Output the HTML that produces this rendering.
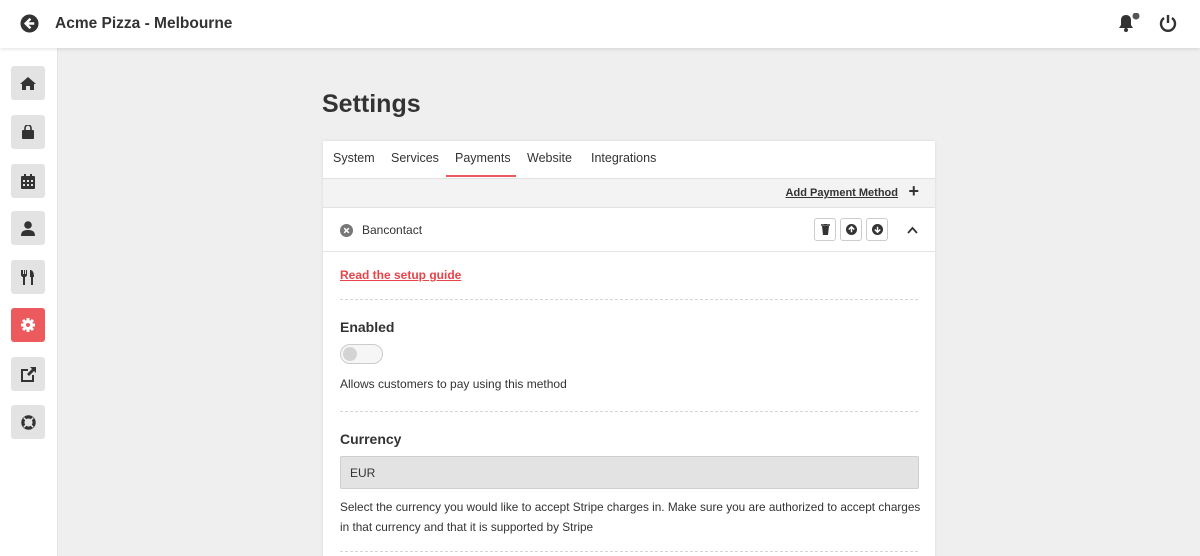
<!DOCTYPE html>
<html><head><style>
*{box-sizing:border-box;margin:0;padding:0}
html,body{width:1200px;height:556px;overflow:hidden}
body{background:#efefef;font-family:"Liberation Sans",sans-serif;color:#333;position:relative}
.hdr{position:absolute;left:0;top:0;width:1200px;height:48px;background:#fff;box-shadow:0 1px 4px rgba(0,0,0,.12);z-index:2}
.side{position:absolute;left:0;top:48px;width:58px;height:520px;background:#fff;border-right:1px solid #e4e4e4}
.sb{position:absolute;left:11px;width:34px;height:34px;background:#e3e3e3;border-radius:3px;display:flex;align-items:center;justify-content:center}
.card{position:absolute;left:323px;top:141px;width:612px;height:420px;background:#fff;box-shadow:0 0 3px rgba(0,0,0,.1)}
.tab{position:absolute;top:10px;font-size:12.5px;color:#333}
.ib{position:absolute;top:10px;width:22px;height:23px;border:1px solid #ccc;border-radius:3px;display:flex;align-items:center;justify-content:center}
.dash{position:absolute;left:17px;width:578px;border-top:1px dashed #d5d5d5}
</style></head><body>
<div class="hdr">
<svg style="position:absolute;left:20px;top:14px" width="19" height="19" viewBox="0 0 20 20"><circle cx="10" cy="10" r="9.5" fill="#333"/><path d="M11 5L6 10l5 5M6.5 10H15" stroke="#fff" stroke-width="2.6" fill="none"/></svg>
<div style="position:absolute;left:55px;top:15px;font-size:15.5px;font-weight:bold;color:#333">Acme Pizza - Melbourne</div>
<svg style="position:absolute;left:1117px;top:13px" width="24" height="20" viewBox="0 0 24 20"><path d="M9 2c-3 0-5 2-5 5v5l-2 3h14l-2-3V7c0-3-2-5-5-5z" fill="#333"/><circle cx="9" cy="17" r="2" fill="#333"/><circle cx="19" cy="3" r="3.5" fill="#555"/></svg>
<svg style="position:absolute;left:1159px;top:14px" width="18" height="18" viewBox="0 0 18 18"><path d="M5 4A7 7 0 1 0 13 4" stroke="#333" stroke-width="2.4" fill="none"/><path d="M9 1v8" stroke="#333" stroke-width="2.4"/></svg>
</div>
<div class="side">
<div class="sb" style="top:18px"><svg width="16" height="14" viewBox="0 0 16 14"><path d="M8 1L0 8h2v6h4V10h4v4h4V8h2z" fill="#333"/></svg></div>
<div class="sb" style="top:67px"><svg width="14" height="14" viewBox="0 0 14 14"><path d="M4 5V3a3 3 0 0 1 6 0v2" stroke="#333" stroke-width="1.6" fill="none"/><rect x="1" y="5" width="12" height="9" rx="1" fill="#333"/></svg></div>
<div class="sb" style="top:116px"><svg width="14" height="15" viewBox="0 0 14 15"><rect x="0" y="2" width="14" height="13" rx="1" fill="#333"/><g fill="#e3e3e3"><rect x="2" y="6" width="2" height="2"/><rect x="6" y="6" width="2" height="2"/><rect x="10" y="6" width="2" height="2"/><rect x="2" y="10" width="2" height="2"/><rect x="6" y="10" width="2" height="2"/><rect x="10" y="10" width="2" height="2"/></g><rect x="3" y="0" width="2" height="3" fill="#333"/><rect x="9" y="0" width="2" height="3" fill="#333"/></svg></div>
<div class="sb" style="top:163px"><svg width="14" height="15" viewBox="0 0 14 15"><circle cx="7" cy="4" r="3.8" fill="#333"/><path d="M0 15c0-5 3-6 7-6s7 1 7 6z" fill="#333"/></svg></div>
<div class="sb" style="top:212px"><svg width="14" height="15" viewBox="0 0 14 15"><path d="M0 0v5c0 1 1 2 2 2v8h2V7c1 0 2-1 2-2V0H5v4H4V0H3v4H2V0z M9 0c3 0 4 3 4 7h-1v8h-2V7H9z" fill="#333"/></svg></div>
<div class="sb" style="top:260px;background:#ec5a5e"><svg width="14" height="14" viewBox="0 0 14 14"><circle cx="7" cy="7" r="5" fill="#fff"/><g stroke="#fff" stroke-width="3"><path d="M7 0v14M0 7h14M2 2l10 10M12 2L2 12"/></g><circle cx="7" cy="7" r="2" fill="#ec5a5e"/></svg></div>
<div class="sb" style="top:309px"><svg width="15" height="15" viewBox="0 0 15 15"><path d="M7 3H1v11h11V8" stroke="#333" stroke-width="2" fill="none"/><path d="M9 0h6v6l-2-2-5 5-2-2 5-5z" fill="#333"/></svg></div>
<div class="sb" style="top:357px"><svg width="15" height="15" viewBox="0 0 16 16"><circle cx="8" cy="8" r="6" stroke="#333" stroke-width="3.4" fill="none"/><g stroke="#e3e3e3" stroke-width="1.6"><path d="M3 3l3 3M13 3l-3 3M3 13l3-3M13 13l-3-3"/></g></svg></div>
</div>
<div style="position:absolute;left:322px;top:90px;font-size:25px;font-weight:bold;color:#333">Settings</div>
<div class="card">
<div class="tab" style="left:10px">System</div>
<div class="tab" style="left:68px">Services</div>
<div class="tab" style="left:132px">Payments</div>
<div class="tab" style="left:204px">Website</div>
<div class="tab" style="left:268px">Integrations</div>
<div style="position:absolute;left:123px;top:34px;width:70px;height:2px;background:#ec5a5e"></div>
<div style="position:absolute;left:0;top:37px;width:612px;height:30px;background:#f3f3f3;border-top:1px solid #e2e2e2;border-bottom:1px solid #e2e2e2">
<span style="position:absolute;right:37px;top:8px;font-size:11px;font-weight:bold;text-decoration:underline;color:#333">Add Payment Method</span>
<span style="position:absolute;right:16px;top:2px;font-size:18px;font-weight:bold">+</span></div>
<div style="position:absolute;left:0;top:67px;width:612px;height:44px;border-bottom:1px solid #e4e4e4">
<svg style="position:absolute;left:17px;top:16px" width="13" height="13" viewBox="0 0 14 14"><circle cx="7" cy="7" r="7" fill="#777"/><path d="M4.5 4.5l5 5M9.5 4.5l-5 5" stroke="#fff" stroke-width="1.6"/></svg>
<span style="position:absolute;left:39px;top:15px;font-size:12px">Bancontact</span>
<div class="ib" style="left:491px"><svg width="9" height="11" viewBox="0 0 9 11"><path d="M0 1h9M3 0h3" stroke="#333" stroke-width="1.4"/><path d="M1 2h7l-1 9H2z" fill="#333"/></svg></div>
<div class="ib" style="left:517px"><svg width="11" height="11" viewBox="0 0 12 12"><circle cx="6" cy="6" r="6" fill="#333"/><path d="M6 9V3M3 6l3-3 3 3" stroke="#fff" stroke-width="1.6" fill="none"/></svg></div>
<div class="ib" style="left:543px"><svg width="11" height="11" viewBox="0 0 12 12"><circle cx="6" cy="6" r="6" fill="#333"/><path d="M6 3v6M3 6l3 3 3-3" stroke="#fff" stroke-width="1.6" fill="none"/></svg></div>
<svg style="position:absolute;left:584px;top:18px" width="11" height="8" viewBox="0 0 11 8"><path d="M1 7l4.5-5L10 7" stroke="#333" stroke-width="1.8" fill="none"/></svg>
</div>
<div style="position:absolute;left:17px;top:127px;font-size:12px;font-weight:bold;color:#e8444a;text-decoration:underline">Read the setup guide</div>
<div class="dash" style="top:158px"></div>
<div style="position:absolute;left:17px;top:178px;font-size:14px;font-weight:bold">Enabled</div>
<div style="position:absolute;left:17px;top:203px;width:43px;height:20px;border:1px solid #ccc;border-radius:10px;background:#f6f6f6"><div style="position:absolute;left:2px;top:2px;width:14px;height:14px;border-radius:50%;background:#d4d4d4"></div></div>
<div style="position:absolute;left:17px;top:236px;font-size:12px">Allows customers to pay using this method</div>
<div class="dash" style="top:270px"></div>
<div style="position:absolute;left:17px;top:290px;font-size:14px;font-weight:bold">Currency</div>
<div style="position:absolute;left:17px;top:315px;width:579px;height:33px;background:#e3e3e3;border:1px solid #cfcfcf;border-radius:2px;font-size:12px;padding:9px 9px">EUR</div>
<div style="position:absolute;left:17px;top:356px;width:590px;font-size:11.8px;line-height:20px;white-space:nowrap">Select the currency you would like to accept Stripe charges in. Make sure you are authorized to accept charges<br>in that currency and that it is supported by Stripe</div>
<div class="dash" style="top:410px"></div>
</div>
</body></html>
